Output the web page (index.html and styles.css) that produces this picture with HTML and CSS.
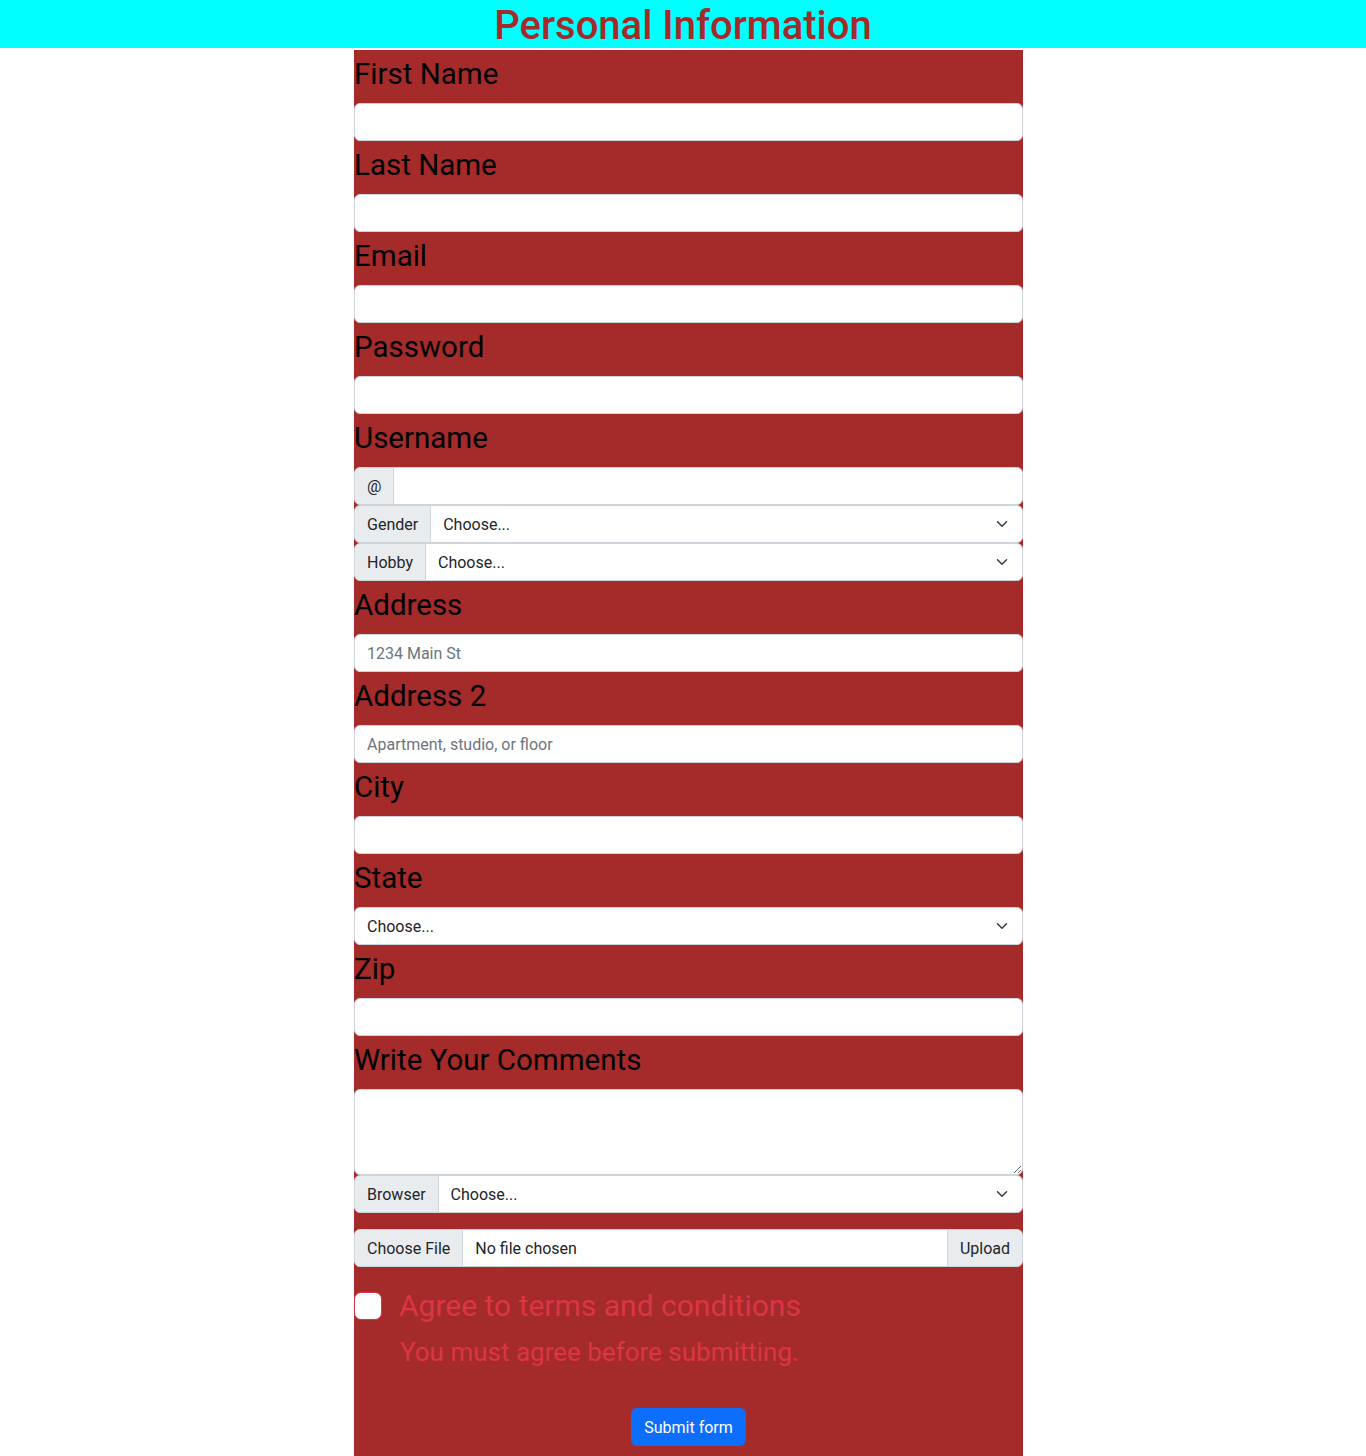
FILE: index.html
```html
<!DOCTYPE html>
<html lang="en">
<head>
<meta charset="utf-8">
<title>Personal Information</title>
<link rel="stylesheet" href="styles.css">
</head>
<body>
<header class="page-header">
  <h1 class="page-title">Personal Information</h1>
</header>
<main class="form-wrap">
  <form class="info-form" novalidate>
    <label class="field-label" for="first">First Name</label>
    <input class="form-control" id="first" type="text">

    <label class="field-label" for="last">Last Name</label>
    <input class="form-control" id="last" type="text">

    <label class="field-label" for="email">Email</label>
    <input class="form-control" id="email" type="email">

    <label class="field-label" for="pwd">Password</label>
    <input class="form-control" id="pwd" type="password">

    <label class="field-label" for="user">Username</label>
    <div class="input-group">
      <span class="input-group-text">@</span>
      <input class="form-control" id="user" type="text">
    </div>
    <div class="input-group">
      <label class="input-group-text" for="gender">Gender</label>
      <div class="select-wrap">
        <select class="form-select" id="gender"><option>Choose...</option><option>Male</option><option>Female</option></select>
        <svg class="chevron" viewBox="0 0 16 16" width="16" height="12"><path d="m2 5 6 6 6-6" fill="none" stroke="#343a40" stroke-width="2" stroke-linecap="round" stroke-linejoin="round"/></svg>
      </div>
    </div>
    <div class="input-group">
      <label class="input-group-text" for="hobby">Hobby</label>
      <div class="select-wrap">
        <select class="form-select" id="hobby"><option>Choose...</option><option>Reading</option><option>Sports</option></select>
        <svg class="chevron" viewBox="0 0 16 16" width="16" height="12"><path d="m2 5 6 6 6-6" fill="none" stroke="#343a40" stroke-width="2" stroke-linecap="round" stroke-linejoin="round"/></svg>
      </div>
    </div>

    <label class="field-label" for="addr">Address</label>
    <input class="form-control" id="addr" type="text" placeholder="1234 Main St">

    <label class="field-label" for="addr2">Address 2</label>
    <input class="form-control" id="addr2" type="text" placeholder="Apartment, studio, or floor">

    <label class="field-label" for="city">City</label>
    <input class="form-control" id="city" type="text">

    <label class="field-label" for="state">State</label>
    <div class="select-wrap solo">
      <select class="form-select" id="state"><option>Choose...</option><option>...</option></select>
      <svg class="chevron" viewBox="0 0 16 16" width="16" height="12"><path d="m2 5 6 6 6-6" fill="none" stroke="#343a40" stroke-width="2" stroke-linecap="round" stroke-linejoin="round"/></svg>
    </div>

    <label class="field-label" for="zip">Zip</label>
    <input class="form-control" id="zip" type="text">

    <label class="field-label" for="comments">Write Your Comments</label>
    <textarea class="form-control area" id="comments" rows="3"></textarea>

    <div class="input-group spaced">
      <label class="input-group-text" for="browser">Browser</label>
      <div class="select-wrap">
        <select class="form-select" id="browser"><option>Choose...</option><option>Chrome</option><option>Firefox</option></select>
        <svg class="chevron" viewBox="0 0 16 16" width="16" height="12"><path d="m2 5 6 6 6-6" fill="none" stroke="#343a40" stroke-width="2" stroke-linecap="round" stroke-linejoin="round"/></svg>
      </div>
    </div>

    <div class="input-group spaced">
      <label class="file-field" for="file">
        <span class="file-btn">Choose File</span>
        <span class="file-name">No file chosen</span>
      </label>
      <button class="input-group-text upload-btn" type="button">Upload</button>
    </div>

    <div class="form-check">
      <input class="check-input" type="checkbox" id="agree">
      <label class="check-label" for="agree">Agree to terms and conditions</label>
    </div>
    <div class="invalid-feedback">You must agree before submitting.</div>

    <div class="form-actions">
      <button class="btn-primary" type="submit">Submit form</button>
    </div>
  </form>
</main>
</body>
</html>
```

FILE: styles.css
```css
* {
  box-sizing: border-box;
}

body {
  margin: 0;
  font-family: Roboto, "Liberation Sans", sans-serif;
  color: #212529;
  background: #fff;
}

.page-header {
  height: 48px;
  background: #00ffff;
  text-align: center;
}

.page-title {
  margin: 0;
  padding-top: 3px;
  font-size: 40px;
  line-height: 45px;
  font-weight: 500;
  color: #a52a2a;
}

.form-wrap {
  width: 669px;
  margin: 2px 0 0 354px;
  background: #a52a2a;
  padding-bottom: 20px;
}

.info-form {
  margin: 0;
}

.field-label {
  display: block;
  font-size: 29.5px;
  line-height: 42px;
  padding: 3px 0 8px;
  color: #000;
}

.form-control,
.form-select {
  display: block;
  width: 100%;
  height: 38px;
  margin: 0;
  padding: 6px 12px;
  font-family: inherit;
  font-size: 16px;
  line-height: 24px;
  color: #212529;
  background: #fff;
  border: 1px solid #ced4da;
  border-radius: 6px;
  outline: none;
}

.form-control::placeholder {
  color: #6c757d;
}

.form-select {
  appearance: none;
  -webkit-appearance: none;
  padding: 7px 36px 5px 12px;
}

.area {
  height: 86px;
  resize: vertical;
}

.select-wrap {
  position: relative;
}

.chevron {
  position: absolute;
  right: 13px;
  top: 13px;
  pointer-events: none;
}

.input-group {
  display: flex;
  align-items: stretch;
  width: 100%;
}

.input-group.spaced {
  margin-bottom: 16px;
}

.input-group-text {
  display: flex;
  align-items: center;
  height: 38px;
  padding: 7px 12px 5px;
  font-family: inherit;
  font-size: 16px;
  line-height: 24px;
  color: #212529;
  background: #e9ecef;
  border: 1px solid #ced4da;
  border-radius: 6px 0 0 6px;
  white-space: nowrap;
}

.input-group > .form-control,
.input-group > .select-wrap {
  flex: 1 1 auto;
  width: 1%;
  min-width: 0;
  margin-left: -1px;
}

.input-group > .form-control,
.input-group .form-select {
  border-radius: 0 6px 6px 0;
}

.file-field {
  flex: 1 1 auto;
  display: flex;
  height: 38px;
  background: #fff;
  border: 1px solid #ced4da;
  border-radius: 6px 0 0 6px;
  overflow: hidden;
  font-size: 16px;
  line-height: 24px;
}

.file-btn {
  padding: 7px 12px 5px;
  background: #e9ecef;
  border-right: 1px solid #ced4da;
  color: #212529;
}

.file-name {
  padding: 7px 12px 5px;
  color: #212529;
}

.upload-btn {
  margin-left: -1px;
  border-radius: 0 6px 6px 0;
  cursor: pointer;
}

.form-check {
  display: flex;
  align-items: flex-start;
  gap: 17px;
}

.check-input {
  appearance: none;
  -webkit-appearance: none;
  flex: none;
  width: 28px;
  height: 28px;
  margin: 9px 0 0;
  background: #fff;
  border: 1px solid #dc3545;
  border-radius: 7px;
}

.check-label {
  font-size: 30px;
  line-height: 45px;
  color: #dc3545;
}

.invalid-feedback {
  margin: 5px 0 0 46px;
  font-size: 26px;
  line-height: 39.4px;
  color: #dc3545;
}

.form-actions {
  display: flex;
  justify-content: center;
  margin-top: 36px;
}

.btn-primary {
  height: 38px;
  padding: 7px 12px 5px;
  font-family: inherit;
  font-size: 16px;
  line-height: 24px;
  color: #fff;
  background: #0d6efd;
  border: 1px solid #0d6efd;
  border-radius: 6px;
  cursor: pointer;
}
```
